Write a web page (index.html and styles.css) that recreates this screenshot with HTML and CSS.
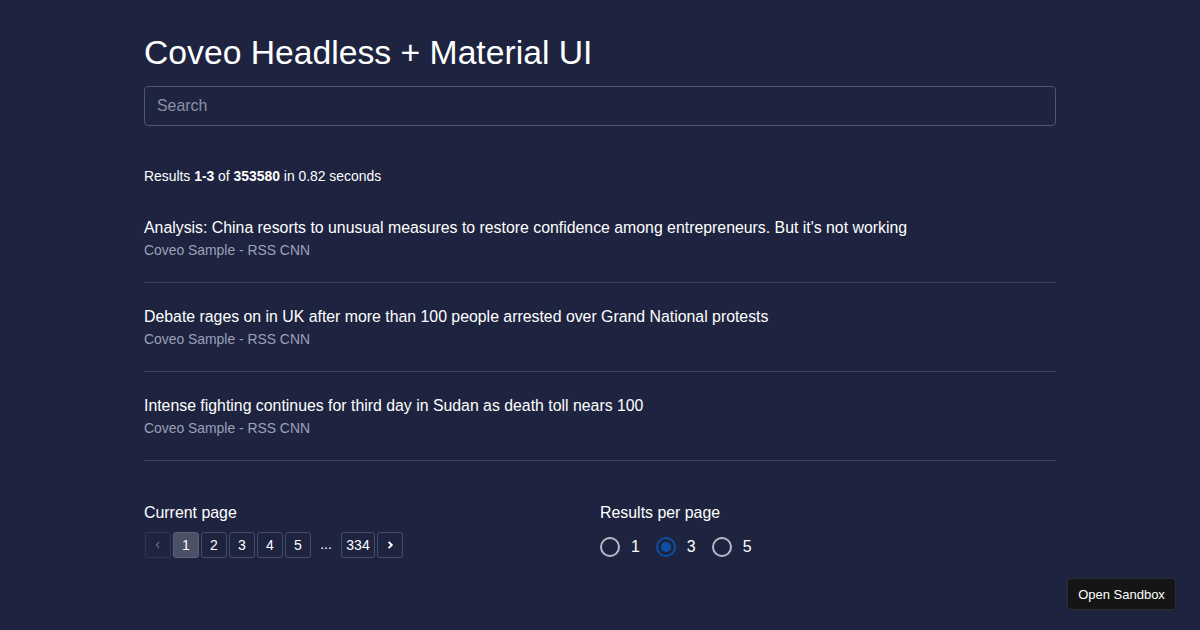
FILE: index.html
```html
<!DOCTYPE html>
<html>
<head>
<meta charset="utf-8">
<link rel="stylesheet" href="styles.css">
</head>
<body>
<main class="page">
  <h1 class="title">Coveo Headless + Material UI</h1>
  <div class="search"><span class="placeholder">Search</span></div>
  <p class="summary">Results <b>1-3</b> of <b>353580</b> in 0.82 seconds</p>
  <ul class="results">
    <li class="result">
      <div class="r-title">Analysis: China resorts to unusual measures to restore confidence among entrepreneurs. But it's not working</div>
      <div class="r-source">Coveo Sample - RSS CNN</div>
    </li>
    <li class="result">
      <div class="r-title">Debate rages on in UK after more than 100 people arrested over Grand National protests</div>
      <div class="r-source">Coveo Sample - RSS CNN</div>
    </li>
    <li class="result">
      <div class="r-title">Intense fighting continues for third day in Sudan as death toll nears 100</div>
      <div class="r-source">Coveo Sample - RSS CNN</div>
    </li>
  </ul>
  <div class="footer">
    <div class="col">
      <div class="label">Current page</div>
      <div class="pager">
        <span class="pbtn disabled"><svg width="10" height="10" viewBox="0 0 10 10"><path d="M6.2 2 L3.4 5 L6.2 8" fill="none" stroke="currentColor" stroke-width="1.4"/></svg></span>
        <span class="pbtn active">1</span>
        <span class="pbtn">2</span>
        <span class="pbtn">3</span>
        <span class="pbtn">4</span>
        <span class="pbtn">5</span>
        <span class="ellipsis">...</span>
        <span class="pbtn wide">334</span>
        <span class="pbtn"><svg width="10" height="10" viewBox="0 0 10 10"><path d="M3.6 1.8 L6.8 5 L3.6 8.2" fill="none" stroke="currentColor" stroke-width="1.9"/></svg></span>
      </div>
    </div>
    <div class="col">
      <div class="label">Results per page</div>
      <div class="radios">
        <span class="radio"><span class="circle"></span>1</span>
        <span class="radio checked"><span class="circle"></span>3</span>
        <span class="radio"><span class="circle"></span>5</span>
      </div>
    </div>
  </div>
</main>
<button class="sandbox">Open Sandbox</button>
</body>
</html>
```

FILE: styles.css
```css
html, body {
  margin: 0;
  padding: 0;
  background: #1e2440;
  color: #ffffff;
  font-family: "Liberation Sans", Arial, sans-serif;
  height: 100%;
  overflow: hidden;
}
.page {
  width: 912px;
  margin: 0 auto;
  padding-top: 32px;
}
.title {
  font-size: 33.7px;
  font-weight: 400;
  margin: 0;
  line-height: 40px;
}
.search {
  margin-top: 14px;
  height: 38px;
  border: 1px solid #4f5670;
  border-radius: 4px;
  display: flex;
  align-items: center;
  padding: 0 12px;
}
.placeholder {
  font-size: 15.9px;
  color: #8c91a6;
}
.summary {
  margin: 42px 0 0;
  font-size: 13.9px;
  line-height: 16px;
}
.summary b { font-weight: 700; }
.results {
  list-style: none;
  margin: 25px 0 0;
  padding: 0;
}
.result {
  border-bottom: 1px solid #3b4259;
  padding: 8px 0 22px;
}
.result + .result { padding-top: 23px; }
.r-title {
  font-size: 15.85px;
  line-height: 22px;
  color: #ffffff;
}
.r-source {
  font-size: 13.9px;
  line-height: 20px;
  color: #9aa1b8;
  margin-top: 1px;
}
.footer {
  display: flex;
  margin-top: 42px;
}
.col { width: 456px; }
.label {
  font-size: 15.9px;
  line-height: 20px;
}
.pager {
  display: flex;
  align-items: center;
  gap: 2px;
  margin: 9px 0 0 1px;
}
.pbtn {
  box-sizing: border-box;
  min-width: 26px;
  height: 26px;
  border: 1px solid #454c64;
  border-radius: 3px;
  display: flex;
  align-items: center;
  justify-content: center;
  font-size: 14px;
  color: #ffffff;
  padding: 0 4px;
}
.pbtn.wide { width: 34px; }
.pbtn.disabled { color: #5d6378; border-color: #2f3650; }
.pbtn.active { background: #4b5066; border-color: #5c6179; }
.ellipsis {
  width: 26px;
  text-align: center;
  font-size: 14px;
  color: #ffffff;
  padding-bottom: 2px;
}
.radios {
  display: flex;
  align-items: center;
  margin-top: 14px;
}
.radio {
  display: flex;
  align-items: center;
  font-size: 15.9px;
  margin-right: 16px;
}
.circle {
  box-sizing: border-box;
  width: 20px;
  height: 20px;
  border: 2px solid #b7bac4;
  border-radius: 50%;
  margin-right: 11px;
  position: relative;
}
.radio.checked .circle { border-color: #0d4fa3; }
.radio.checked .circle::after {
  content: "";
  position: absolute;
  left: 3px; top: 3px;
  width: 10px; height: 10px;
  border-radius: 50%;
  background: #0d4fa3;
}
.sandbox {
  position: fixed;
  right: 24px;
  bottom: 20px;
  width: 109px;
  height: 32px;
  padding: 0;
  background: #151515;
  border: 1px solid #2e2e2e;
  border-radius: 4px;
  color: #ffffff;
  font-family: "Liberation Sans", Arial, sans-serif;
  font-size: 13px;
}
```
